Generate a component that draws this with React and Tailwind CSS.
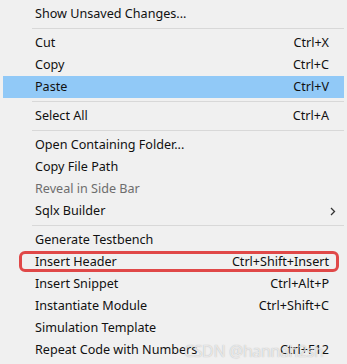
import React from 'react';

const items = [
    { label: 'Show Unsaved Changes...' },
    { sep: true },
    { label: 'Cut', key: 'Ctrl+X' },
    { label: 'Copy', key: 'Ctrl+C' },
    { label: 'Paste', key: 'Ctrl+V', active: true },
    { sep: true },
    { label: 'Select All', key: 'Ctrl+A' },
    { sep: true },
    { label: 'Open Containing Folder...' },
    { label: 'Copy File Path' },
    { label: 'Reveal in Side Bar', disabled: true },
    { label: 'Sqlx Builder', submenu: true },
    { sep: true },
    { label: 'Generate Testbench' },
    { label: 'Insert Header', key: 'Ctrl+Shift+Insert', marked: true },
    { label: 'Insert Snippet', key: 'Ctrl+Alt+P' },
    { label: 'Instantiate Module', key: 'Ctrl+Shift+C' },
    { label: 'Simulation Template' },
    { label: 'Repeat Code with Numbers', key: 'Ctrl+F12' },
];

const App = () => {
    return (
        <div
            className="relative w-[347px] h-[364px] bg-[#f0f0f0] pt-[3px] px-[3px] overflow-hidden text-[12.6px] text-[#111]"
            style={{ fontFamily: '"Noto Sans", "Open Sans", sans-serif' }}
        >
            {items.map((item, i) => {
                if (item.sep) {
                    return (
                        <div key={i} className="h-[7px] flex items-center pl-[29px]">
                            <div className="h-px w-full bg-[#d8d8d8]" />
                        </div>
                    );
                }
                return (
                    <div
                        key={i}
                        className={`relative h-[22px] flex items-center pl-[32px] pr-[15px] ${item.active ? 'bg-[#91c9f7]' : ''} ${item.disabled ? 'text-[#6d6d6d]' : ''}`}
                    >
                        <span className="flex-1 whitespace-nowrap">{item.label}</span>
                        {item.key && <span className="whitespace-nowrap">{item.key}</span>}
                        {item.submenu && (
                            <svg width="6" height="9" viewBox="0 0 6 9" className="mr-[-7px]">
                                <path d="M1 1l3.5 3.5L1 8" fill="none" stroke="#333" strokeWidth="1.3" />
                            </svg>
                        )}
                        {item.marked && (
                            <div className="absolute left-[16px] right-[5px] top-0 bottom-[1px] border-[3px] border-[#e04848] rounded-[6px]" />
                        )}
                    </div>
                );
            })}
            {/* watermark */}
            <div className="absolute left-[184px] top-[339px] text-[16px] text-white/70 whitespace-nowrap tracking-tight [text-shadow:0_0_1px_rgba(120,120,120,0.6)]">
                CSDN @hannah2sh
            </div>
        </div>
    );
};

export default App;
